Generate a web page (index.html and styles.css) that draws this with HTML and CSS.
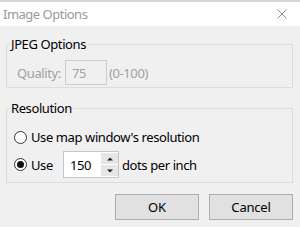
FILE: index.html
```html
<!DOCTYPE html>
<html>
<head>
<meta charset="utf-8">
<link rel="stylesheet" href="styles.css">
</head>
<body>
<div class="win">
  <div class="topline"></div>
  <div class="titlebar">
    <span class="title">Image Options</span>
    <svg class="close" width="10" height="10" viewBox="0 0 10 10"><path d="M0.5 0.5 L9.5 9.5 M9.5 0.5 L0.5 9.5" stroke="#8a8a8a" stroke-width="1" fill="none"/></svg>
  </div>
  <div class="client">
    <fieldset class="group jpeg">
      <legend>JPEG Options</legend>
      <div class="row disabled">
        <span class="lbl">Quality:</span>
        <span class="field field-dis">75</span>
        <span class="range">(0-100)</span>
      </div>
    </fieldset>
    <fieldset class="group res">
      <legend>Resolution</legend>
      <div class="radio-row r1"><span class="radio"></span><span>Use map window's resolution</span></div>
      <div class="radio-row r2"><span class="radio on"></span><span class="use">Use</span>
        <span class="spin"><span class="field field-on">150</span><span class="arrows"><span class="up"><svg width="6" height="4" viewBox="0 0 6 4"><path d="M0 3.5 L3 0.5 L6 3.5 Z" fill="#222"/></svg></span><span class="down"><svg width="6" height="4" viewBox="0 0 6 4"><path d="M0 0.5 L3 3.5 L6 0.5 Z" fill="#222"/></svg></span></span></span>
        <span class="dots">dots per inch</span>
      </div>
    </fieldset>
    <div class="buttons">
      <button class="btn">OK</button>
      <button class="btn">Cancel</button>
    </div>
  </div>
</div>
</body>
</html>
```
FILE: styles.css
```css
html, body { margin: 0; padding: 0; }
body {
  width: 300px;
  height: 227px;
  overflow: hidden;
  font-family: "Noto Sans", "Open Sans", sans-serif;
  font-size: 13px;
  letter-spacing: -0.4px;
  color: #000;
  background: #f0f0f0;
}
.win { display: flex; flex-direction: column; height: 227px; }
.topline { height: 2px; background: #d4d4d4; }
.titlebar {
  height: 24px;
  background: #fff;
  display: flex;
  align-items: center;
  justify-content: space-between;
  padding: 0 13px 0 3px;
}
.title { color: #9a9a9a; font-size: 13px; letter-spacing: -0.5px; }
.close { display: block; margin-top: -1px; }
.client {
  flex: 1;
  background: #f0f0f0;
  padding: 9px 7px 0 6px;
  display: flex;
  flex-direction: column;
}
.group {
  margin: 0;
  border: 1px solid #dcdcdc;
  padding: 6px 7px 2px 7px;
  min-width: 0;
}
.group legend {
  padding: 0 1px;
  margin-left: -4px;
  font-size: 13px;
  line-height: 19px;
}
.res { margin-top: 11px; padding-top: 8px; padding-bottom: 4px; }
.row { display: flex; align-items: center; margin-left: 3px; }
.disabled { color: #a0a0a0; }
.lbl { width: 48px; }
.field {
  box-sizing: border-box;
  height: 25px;
  display: flex;
  align-items: center;
  padding-left: 6px;
}
.field-dis {
  width: 42px;
  border: 1px solid #cccccc;
  background: #f0f0f0;
  color: #a0a0a0;
}
.range { margin-left: 2px; }
.radio-row { display: flex; align-items: center; height: 22px; }
.r2 { height: 27px; margin-top: 3px; }
.radio {
  box-sizing: border-box;
  width: 13px;
  height: 13px;
  border: 1px solid #333;
  border-radius: 50%;
  background: #fff;
  margin-right: 4px;
  display: flex;
  align-items: center;
  justify-content: center;
}
.radio.on::after {
  content: "";
  width: 7px;
  height: 7px;
  border-radius: 50%;
  background: #111;
}
.use { width: 32px; }
.spin { display: flex; height: 27px; border: 1px solid #c6c6c6; box-sizing: border-box; background: #fff; }
.field-on { width: 37px; height: 25px; background: #fff; color: #000; }
.arrows { width: 17px; display: flex; flex-direction: column; gap: 1px; padding: 1px 0 1px 0; }
.up, .down { flex: 1; display: flex; align-items: center; justify-content: center; background: #e6e6e6; }
.dots { margin-left: 3px; }
.buttons {
  display: flex;
  justify-content: flex-end;
  gap: 10px;
  margin-top: 11px;
}
.btn {
  box-sizing: border-box;
  width: 84px;
  height: 26px;
  background: #e1e1e1;
  border: 1px solid #adadad;
  font-family: "Noto Sans", "Open Sans", sans-serif;
  font-size: 13px;
  letter-spacing: -0.2px;
  color: #000;
  padding: 0;
  margin: 0;
}
```
